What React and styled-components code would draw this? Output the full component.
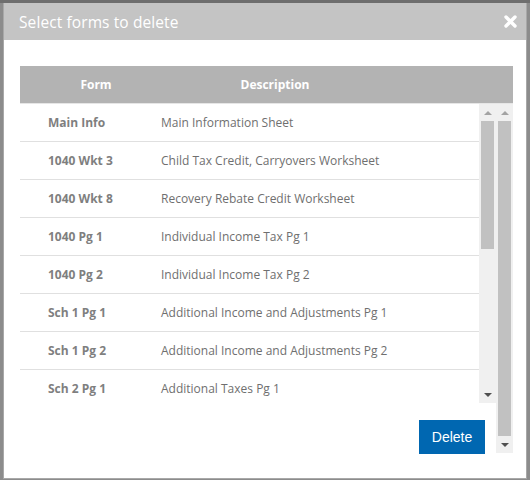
import React from 'react';
import styled, { createGlobalStyle } from 'styled-components';

const forms = [
  { id: 'main', name: 'Main Info', description: 'Main Information Sheet' },
  { id: 'w3', name: '1040 Wkt 3', description: 'Child Tax Credit, Carryovers Worksheet' },
  { id: 'w8', name: '1040 Wkt 8', description: 'Recovery Rebate Credit Worksheet' },
  { id: 'p1', name: '1040 Pg 1', description: 'Individual Income Tax Pg 1' },
  { id: 'p2', name: '1040 Pg 2', description: 'Individual Income Tax Pg 2' },
  { id: 's1p1', name: 'Sch 1 Pg 1', description: 'Additional Income and Adjustments Pg 1' },
  { id: 's1p2', name: 'Sch 1 Pg 2', description: 'Additional Income and Adjustments Pg 2' },
  { id: 's2p1', name: 'Sch 2 Pg 1', description: 'Additional Taxes Pg 1' },
];

const Scrollbar = ({ height, thumbHeight }) => (
  <ScrollTrack height={height}>
    <ScrollArrow>
      <Triangle dir="up" />
    </ScrollArrow>
    <ScrollThumb style={{ height: thumbHeight }} />
    <ScrollSpacer />
    <ScrollArrow>
      <Triangle dir="down" />
    </ScrollArrow>
  </ScrollTrack>
);

const App = () => {
  return (
    <>
      <GlobalStyle />
      <Backdrop>
        <Modal>
          <ModalHeader>
            <ModalTitle>Select forms to delete</ModalTitle>
            <CloseButton aria-label="Close">
              <svg width="13" height="13" viewBox="0 0 13 13">
                <path d="M2 2 L11 11 M11 2 L2 11" stroke="#fff" strokeWidth="3.4" strokeLinecap="round" />
              </svg>
            </CloseButton>
          </ModalHeader>

          <ModalBody>
            <TableHead>
              <HeadCell width="152px">Form</HeadCell>
              <HeadCell width="206px">Description</HeadCell>
            </TableHead>

            <TableArea>
              <LeftColumn>
                <RowsPane>
                  <RowsList>
                    {forms.map((form) => (
                      <Row key={form.id}>
                        <FormCell>{form.name}</FormCell>
                        <DescCell>{form.description}</DescCell>
                      </Row>
                    ))}
                  </RowsList>
                  <Scrollbar height="299px" thumbHeight="128px" />
                </RowsPane>
                <Footer>
                  <DeleteButton>Delete</DeleteButton>
                </Footer>
              </LeftColumn>
              <Scrollbar height="349px" thumbHeight="315px" />
            </TableArea>
          </ModalBody>
        </Modal>
      </Backdrop>
    </>
  );
};

export default App;

const GlobalStyle = createGlobalStyle`
  html, body {
    margin: 0;
    padding: 0;
    background: #7a7a7a;
  }
  * {
    box-sizing: border-box;
  }
`;

const Backdrop = styled.div`
  width: 530px;
  height: 480px;
  padding: 3px 3px 1px 3px;
  background: linear-gradient(to bottom, #6e6e6e 0, #6e6e6e 3px, #8c8c8c 3px);
  overflow: hidden;
`;

const Modal = styled.div`
  width: 524px;
  height: 476px;
  background: #fff;
  border: 1px solid #a8a8a8;
  border-top: none;
  display: flex;
  flex-direction: column;
`;

const ModalHeader = styled.div`
  height: 37px;
  flex-shrink: 0;
  background: #c4c4c4;
  display: flex;
  align-items: center;
  justify-content: space-between;
  padding: 0 9px 0 15px;
`;

const ModalTitle = styled.h2`
  margin: 0;
  font-family: "Open Sans", "Noto Sans", sans-serif;
  font-size: 15.5px;
  font-weight: 400;
  color: #fff;
  letter-spacing: 0.1px;
`;

const CloseButton = styled.button`
  background: none;
  border: none;
  padding: 0;
  display: flex;
  cursor: pointer;
`;

const ModalBody = styled.div`
  padding: 26px 13px 0 16px;
  display: flex;
  flex-direction: column;
`;

const TableHead = styled.div`
  height: 38px;
  background: #b3b3b3;
  border-bottom: 1px solid #e6e6e6;
  display: flex;
  align-items: center;
`;

const HeadCell = styled.div`
  width: ${({ width }) => width};
  text-align: center;
  font-family: "Open Sans", "Noto Sans", sans-serif;
  font-size: 12px;
  font-weight: 700;
  color: #fff;
`;

const TableArea = styled.div`
  display: flex;
  align-items: flex-start;
`;

const LeftColumn = styled.div`
  flex: 1;
  display: flex;
  flex-direction: column;
`;

const RowsPane = styled.div`
  display: flex;
  height: 299px;
`;

const RowsList = styled.div`
  flex: 1;
  height: 100%;
  overflow: hidden;
`;

const Row = styled.div`
  height: 38px;
  border-bottom: 1px solid #e0e0e0;
  display: flex;
  align-items: center;
  font-family: "Open Sans", "Noto Sans", sans-serif;
  font-size: 12px;
`;

const FormCell = styled.div`
  width: 141px;
  padding-left: 28px;
  font-weight: 700;
  color: #7f7f7f;
`;

const DescCell = styled.div`
  flex: 1;
  color: #6f6f6f;
`;

const ScrollTrack = styled.div`
  width: 17px;
  height: ${({ height }) => height};
  flex-shrink: 0;
  background: #f0f0f0;
  display: flex;
  flex-direction: column;
  align-items: center;
`;

const ScrollArrow = styled.div`
  width: 17px;
  height: 17px;
  display: flex;
  align-items: center;
  justify-content: center;
`;

const Triangle = styled.div`
  width: 0;
  height: 0;
  border-left: 4px solid transparent;
  border-right: 4px solid transparent;
  ${({ dir }) =>
    dir === 'up'
      ? 'border-bottom: 4px solid #a3a3a3;'
      : 'border-top: 4px solid #505050;'}
`;

const ScrollThumb = styled.div`
  width: 13px;
  background: #c1c1c1;
  flex-shrink: 0;
`;

const ScrollSpacer = styled.div`
  flex: 1;
`;

const Footer = styled.div`
  display: flex;
  justify-content: flex-end;
  padding: 17px 11px 0 0;
`;

const DeleteButton = styled.button`
  width: 66px;
  height: 34px;
  background: #0067b1;
  border: none;
  border-radius: 0;
  color: #fff;
  font-family: "Liberation Sans", Arial, sans-serif;
  font-size: 14px;
  cursor: pointer;
`;
